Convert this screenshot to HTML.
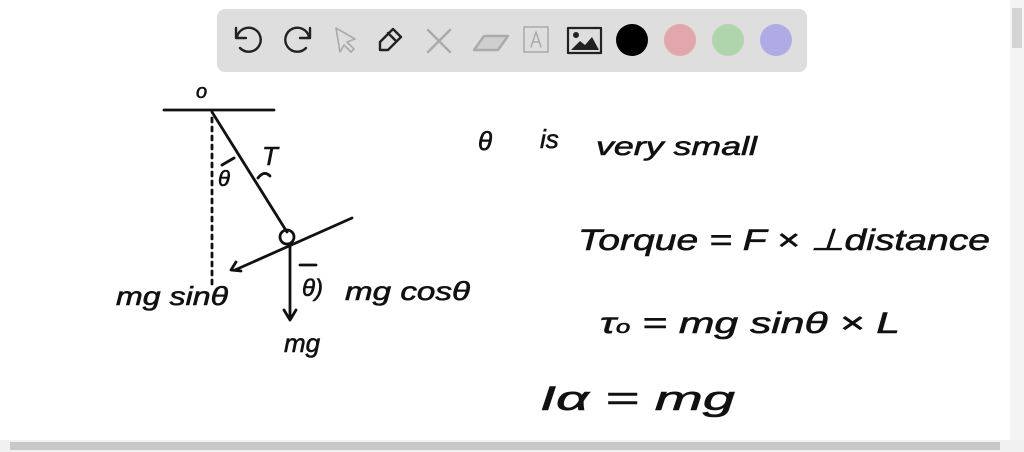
<!DOCTYPE html>
<html><head><meta charset="utf-8"><style>
html,body{margin:0;padding:0;width:1024px;height:452px;overflow:hidden;background:#fff;font-family:"Liberation Sans",sans-serif}
.tb{position:absolute;left:217px;top:9px;width:590px;height:63px;background:#dedede;border-radius:8px}
svg text{font-family:"Liberation Sans",sans-serif;font-style:italic;fill:#111;stroke:#111;stroke-width:0.6}
</style></head><body>
<div class="tb"></div>
<svg style="position:absolute;left:0;top:0" width="1024" height="452">
<g fill="none" stroke="#222" stroke-width="2.4" stroke-linecap="round" stroke-linejoin="round">
<path d="M236 28 v10 h10 M237 37 a12 12 0 1 1 3 11"/>
<path d="M310 28 v10 h-10 M309 37 a12 12 0 1 0 -3 11"/>
<path d="M336 28 l4 24 l4 -7 l7 7 l3 -3 l-7 -7 l8 -3z" stroke="#aaa" stroke-width="1.6"/>
<path d="M380 50 v-8 l13 -13 l8 8 l-13 13z M388 33 l8 8"/>
<path d="M428 30 l22 22 M450 30 l-22 22" stroke="#aaa"/>
<path d="M474 50 l10 -14 h24 l-10 14z" stroke="#aaa" fill="#cfcfcf"/>
<rect x="524" y="27" width="24" height="25" stroke="#aaa" stroke-width="1.5"/>
<path d="M531 47 l5 -15 l5 15 M533 42 h6" stroke="#aaa" stroke-width="1.5"/>
<rect x="568" y="28" width="33" height="25" stroke-width="2.2"/>
</g>
<circle cx="576" cy="35" r="3" fill="#222"/>
<path d="M571 50 l9 -9 l5 4 l7 -8 l7 13z" fill="#222"/>
<circle cx="632" cy="40" r="16" fill="#000"/>
<circle cx="680" cy="40" r="16" fill="#e4a6ad"/>
<circle cx="728" cy="40" r="16" fill="#afd5ad"/>
<circle cx="776" cy="40" r="16" fill="#b0abe6"/>
<g fill="none" stroke="#111" stroke-width="2.8" stroke-linecap="round" stroke-linejoin="round">
<path d="M164 110 h110"/>
<path d="M212 112 L287 232"/>
<path d="M212 118 V285" stroke-dasharray="4 5"/>
<path d="M235 270 L352 218"/>
<circle cx="287" cy="237" r="7"/>
<path d="M290 245 V318 M284 310 l6 10 l6 -10"/>
<path d="M236 262 l-5 8 l10 1"/>
<path d="M300 265 l16 0"/>
<path d="M222 165 l12 -7 M258 178 q6 -8 12 -2"/>
</g>
<g font-size="26">
<text x="196" y="98" font-size="20">o</text>
<text x="262" y="165">T</text>
<text x="218" y="186" font-size="22">θ</text>
<text x="116" y="305" textLength="112" lengthAdjust="spacingAndGlyphs">mg sinθ</text>
<text x="302" y="296" font-size="24">θ)</text>
<text x="345" y="300" textLength="125" lengthAdjust="spacingAndGlyphs">mg cosθ</text>
<text x="284" y="352">mg</text>
<text x="478" y="150">θ</text>
<text x="540" y="148">is</text>
<text x="596" y="155" textLength="161" lengthAdjust="spacingAndGlyphs">very small</text>
<text x="578" y="250" font-size="30" textLength="412" lengthAdjust="spacingAndGlyphs">Torque  =  F × ⊥distance</text>
<text x="600" y="333" font-size="30" textLength="300" lengthAdjust="spacingAndGlyphs">τ<tspan font-size="18">o</tspan> =  mg sinθ × L</text>
<text x="540" y="410" font-size="34" textLength="195" lengthAdjust="spacingAndGlyphs">Iα  =  mg</text>
</g>
<rect x="1010" y="0" width="14" height="440" fill="#f4f4f4"/>
<rect x="1012" y="8" width="10" height="40" fill="#d4d4d4"/>
<rect x="0" y="440" width="1024" height="12" fill="#f1f1f1"/>
<rect x="10" y="442" width="990" height="8" fill="#c8c8c8"/>
</svg>
</body></html>
